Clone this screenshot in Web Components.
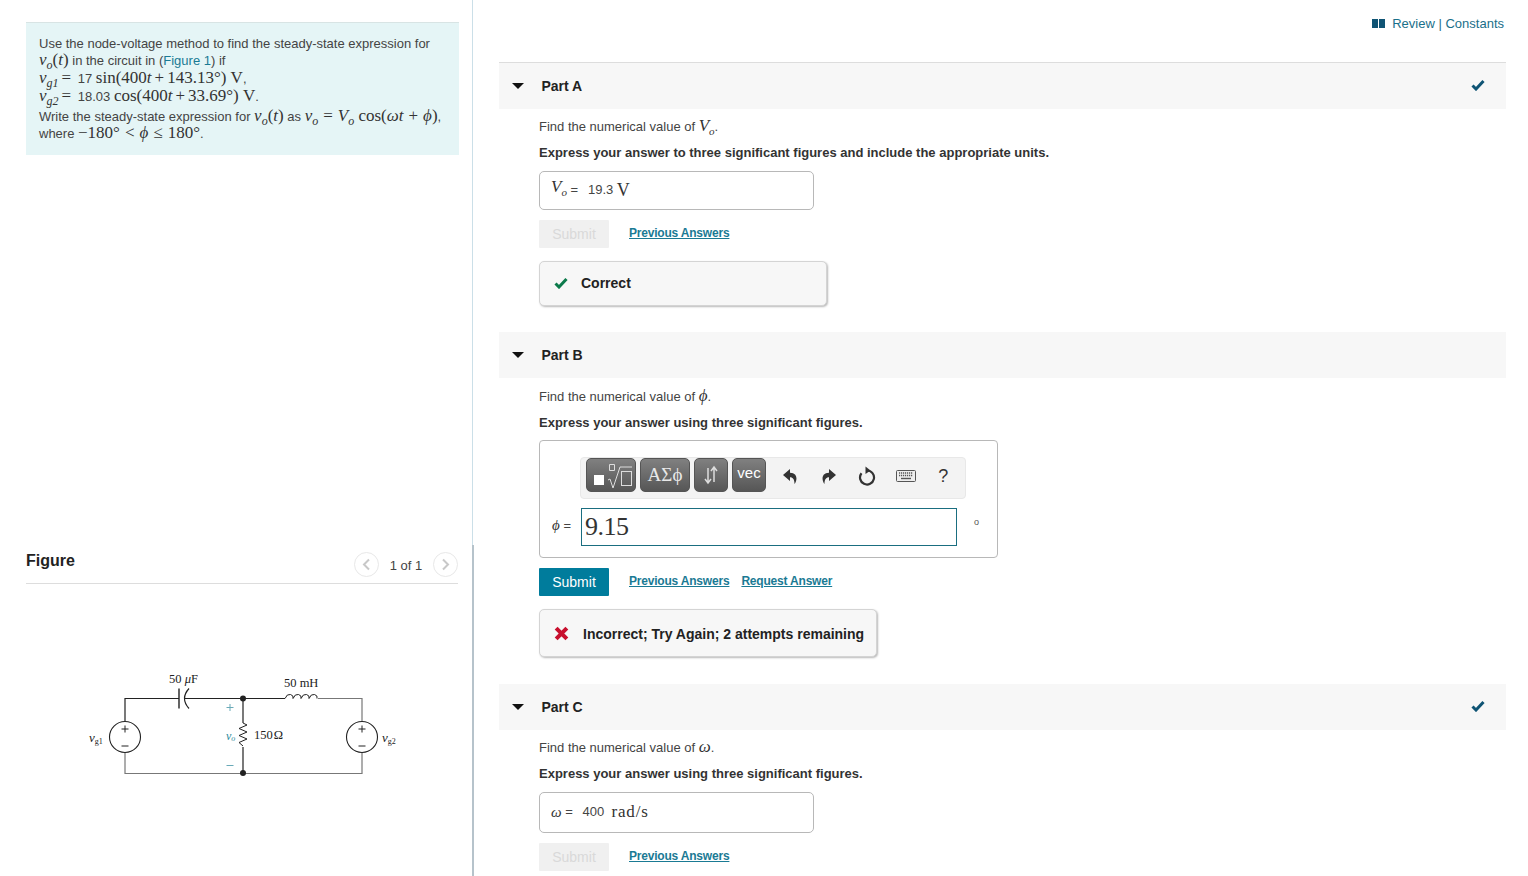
<!DOCTYPE html>
<html><head><meta charset="utf-8"><style>
html,body{margin:0;padding:0;height:876px;overflow:hidden;background:#fff}
body{font:13px/20px "Liberation Sans",Arial,sans-serif;color:#333;display:flex}
span.m{font-family:"Liberation Serif",serif;font-size:17px;color:#333}
span.m sub{font-size:12px;line-height:0}
span.m i.o{font-style:normal;margin:0 3px}
span.m i.o.w{margin:0 5px}
.vv{font:italic 17px/0 "Liberation Serif",serif;color:#333}
.vv sub{font-size:11px;line-height:0}
</style></head><body>
<template id="t-left"><style>
:host{display:flex;flex-direction:column;width:472px;height:876px;box-sizing:border-box;padding:22px 13px 0 26px;flex:none;position:relative}
.rail{position:absolute;left:472px;top:0;width:1px;height:545px;background:#cbdfe8}
.rail2{position:absolute;left:471.5px;top:545px;bottom:0;width:2px;background:#b6c3cb}
.intro{background:#e5f5f6;border-top:1px solid #d8e4e4;padding:12px 13px 0;height:133px;box-sizing:border-box;color:#444}
.fig{margin-top:384px}
</style><div class="rail"></div><div class="rail2"></div><div class="intro"><slot name="intro"></slot></div><div class="fig"><slot name="fig"></slot></div></template>

<template id="t-line"><style>
:host{display:block;font-size:13px;white-space:nowrap;color:#444}
</style><slot></slot></template>

<template id="t-pager"><style>
:host{display:flex;align-items:center;height:45px;border-bottom:1px solid #ddd;box-sizing:border-box;margin-right:1px}
h2{font:bold 16px/20px "Liberation Sans",sans-serif;color:#222;margin:0;flex:1}
.c{width:25px;height:25px;border:1px solid #e8e8e8;border-radius:50%;box-sizing:border-box;display:flex;align-items:center;justify-content:center;position:relative;top:3px}
.t{width:54px;text-align:center;font-size:13px;color:#444;position:relative;top:5px}
svg{display:block}
</style><h2>Figure</h2>
<span class="c"><svg width="9" height="13" viewBox="0 0 9 13"><path d="M7 1.5 2 6.5l5 5" fill="none" stroke="#c8c8c8" stroke-width="2"/></svg></span>
<span class="t">1 of 1</span>
<span class="c"><svg width="9" height="13" viewBox="0 0 9 13"><path d="M2 1.5 7 6.5l-5 5" fill="none" stroke="#c8c8c8" stroke-width="2"/></svg></span></template>

<template id="t-circuit"><style>
:host{display:block;margin-top:81px;margin-left:44px;width:340px;height:120px}
svg{display:block}
text{font-family:"Liberation Serif",serif;fill:#222}
.b{fill:#2d8a9c}
</style>
<svg width="340" height="120" viewBox="70 665 340 120">
<g fill="none" stroke="#222" stroke-width="1.2">
<path d="M125 721V698.5H179M185 698.5H285" />
<path d="M179 688.5V708.5" stroke-width="1.4"/>
<path d="M189 688.5Q180 698.5 189 708.5" stroke-width="1.2"/>
<path d="M243 698.5V723M243 747V773" />
<path d="M243 723l4 2-8 3.5 8 3.5-8 3.5 8 3.5-8 3.5 4 3.500" stroke-width="1"/>
<path d="M285 698.5q2-5 5.500-4t2.500 4q2-5 5.500-4t2.500 4q2-5 5.500-4t2.500 4q2-5 5.500-4t2.500 4" stroke-width="1"/>
</g>
<path d="M318 698.500H362V721M362 753V773.500H125V753" fill="none" stroke="#777" stroke-width="1.2"/>
<circle cx="125" cy="737" r="15.500" fill="#fff" stroke="#222" stroke-width="1.100"/>
<circle cx="362" cy="737" r="15.500" fill="#fff" stroke="#222" stroke-width="1.100"/>
<path d="M121.500 729h7M125 725.500v7M121.500 746h7M358.500 729h7M362 725.500v7M358.500 746h7" stroke="#222" stroke-width="1" fill="none"/>
<circle cx="243" cy="698.500" r="3" fill="#222"/><circle cx="243" cy="773" r="3" fill="#222"/>
<path d="M226.500 707.500h7M230 704v7M226.500 765.500h7" stroke="#6aaab8" stroke-width="1" fill="none"/>
<text x="169" y="683" font-size="12.500">50 <tspan font-style="italic">μ</tspan>F</text>
<text x="284" y="687" font-size="12.500">50 mH</text>
<text x="254" y="739" font-size="12.500">150<tspan dx="1">Ω</tspan></text>
<text x="226" y="740" font-size="12" font-style="italic" class="b">v<tspan font-size="8" dy="1">o</tspan></text>
<text x="89" y="742" font-size="13" font-style="italic">v<tspan font-size="8" dy="2" font-style="normal">g1</tspan></text>
<text x="382" y="742" font-size="13" font-style="italic">v<tspan font-size="8" dy="2" font-style="normal">g2</tspan></text>
</svg></template>

<template id="t-right"><style>
:host{display:block;flex:1;min-width:0;box-sizing:border-box;padding:0 22px 0 25px;margin-left:2px;height:876px;overflow:hidden}
.top{height:62px;display:flex;justify-content:flex-end;align-items:flex-start;gap:7px;padding:14px 2px 0 0;box-sizing:border-box;color:#1a6f8a;font-size:13px}
.top svg{margin-top:5px}
</style><div class="top"><svg width="13" height="9" viewBox="0 0 13 9"><path d="M0 0h6v9H0zM7 0h6v9H7z" fill="#0f5474"/></svg><span>Review | Constants</span></div><slot></slot></template>

<template id="t-part"><style>
:host{display:block}
header{height:var(--h,46px);background:#f7f7f7;border-top:var(--bt,0) solid #ddd;display:flex;align-items:center;box-sizing:border-box;position:relative;padding-left:42.500px;font-size:14px;font-weight:bold;color:#222}
header .car{position:absolute;left:13px;top:50%;margin-top:-3px;width:0;height:0;border:6px solid transparent;border-top:6px solid #111;border-bottom:0}
header .ok{position:absolute;right:21px;top:50%;margin-top:-7px;display:var(--ok,none)}
.body{padding:var(--pt,8px) 0 var(--pb,26px) 40px}
</style><header><span class="car"></span><span><slot name="title"></slot></span><svg class="ok" width="14" height="12" viewBox="0 0 14 12"><path d="M1.500 6.500 5 10 12.500 2" fill="none" stroke="#0f5474" stroke-width="3"/></svg></header><div class="body"><slot></slot></div></template>

<template id="t-q"><style>
:host{display:block;color:#444}
p{margin:0 0 6px;line-height:20px}
p.b{font-weight:bold;color:#333;margin-bottom:var(--qb,8px)}
</style><p><slot></slot></p><p class="b"><slot name="ex"></slot></p></template>

<template id="t-ans"><style>
:host{display:flex;align-items:center;width:275px;height:var(--ah,39px);box-sizing:border-box;border:1px solid #b8b8b8;border-radius:5px;padding:0 0 2px 11px;color:#444;white-space:nowrap}
</style><slot></slot></template>

<template id="t-actions"><style>
:host{display:flex;align-items:center;gap:20px;margin-top:10px;height:28px}
.btn{width:70px;height:28px;box-sizing:border-box;border-radius:1px;display:flex;align-items:center;justify-content:center;font-size:14px;background:#f0f0f0;color:#d9d9d9}
:host([active]) .btn{background:#007c9c;color:#fff}
.l{display:flex;gap:12px;position:relative;top:-1px}
::slotted(*){color:#1a7a94;text-decoration:underline;font-weight:bold;font-size:12px;letter-spacing:-.2px}
</style><span class="btn">Submit</span><span class="l"><slot></slot></span></template>

<template id="t-fb"><style>
:host{display:flex;align-items:center;box-sizing:border-box;margin-top:13px;height:var(--fh,45px);width:var(--fw,288px);background:#f7f7f7;border:1px solid #d4d4d4;border-radius:5px;box-shadow:1px 1px 2px rgba(0,0,0,.28);padding:var(--fp,0 0 1px 14px);gap:var(--fg,13px);font-size:14px;font-weight:bold;color:#222;white-space:nowrap}
</style><slot name="icon"></slot><slot></slot></template>

<template id="t-math"><style>
:host{display:block;box-sizing:border-box;width:459px;height:118px;border:1px solid #b8b8b8;border-radius:4px;position:relative;padding:16px 0 0 40px}
.bar{width:386px;height:42px;box-sizing:border-box;background:#f3f3f3;border:1px solid #e8e8e8;border-radius:4px;display:flex;align-items:flex-start;padding-left:5px;gap:4px}
.k{height:34px;box-sizing:border-box;border-radius:5px;background:linear-gradient(#808080,#565656);border:1px solid #555;color:#fff;display:flex;align-items:center;justify-content:center;font-size:15px}
.i{width:38.500px;height:36px;display:flex;align-items:center;justify-content:center;color:#333;font-size:16px;flex:none}
.tools{display:flex;margin-left:1px}
.row{display:flex;align-items:center;margin:9px 0 0 -29px}
.lab{width:30px;font-size:13px;color:#444;white-space:nowrap;position:relative;left:1px;top:-1px}
.inp{width:376px;height:38px;box-sizing:border-box;border:1px solid #1a6e80;font:26px/36px "Liberation Serif",serif;color:#333;padding-left:3px;letter-spacing:-.5px}
.deg{margin-left:17px;font-size:9px;color:#555;position:relative;top:-5px}
svg{display:block}
</style><div class="bar">
<span class="k" style="width:50px"><svg width="48" height="32" viewBox="0 0 48 32"><rect x="7" y="16" width="10" height="10" fill="#fff"/><path d="M22.500 5.500h5v6h-5z" fill="none" stroke="#ddd"/><path d="M21 21l2-1 3 9 7-21h12" fill="none" stroke="#ddd" stroke-width="1"/><rect x="34.500" y="12.500" width="10" height="14" fill="none" stroke="#ddd"/></svg></span>
<span class="k" style="width:50px;font:19px 'Liberation Serif',serif;color:#e8e8e8">ΑΣϕ</span>
<span class="k" style="width:34px"><svg width="18" height="20" viewBox="0 0 18 20"><path d="M6 3v14M3 14l3 4 3-4M12 17V3M9 6l3-4 3 4" fill="none" stroke="#ddd" stroke-width="1.500"/></svg></span>
<span class="k" style="width:34px;align-items:flex-start;padding-top:6px;line-height:16px">vec</span>
<span class="tools">
<span class="i"><svg width="15" height="15" viewBox="0 0 15 15"><path d="M7 0 0 6l7 6V8.300c3 0 4.500 2.200 4.500 6.700 2.500-3 4-11-4.500-11.300z" fill="#333"/></svg></span>
<span class="i"><svg width="15" height="15" viewBox="0 0 15 15"><path d="M8 0l7 6-7 6V8.300c-3 0-4.500 2.200-4.500 6.700C1 12-.5 4 8 3.700z" fill="#333"/></svg></span>
<span class="i"><svg width="18" height="20" viewBox="0 0 18 20"><path d="M9 4.500a7 7 0 1 1-5.500 2.700" fill="none" stroke="#333" stroke-width="2.200"/><path d="M7.500 0.500l5 4-5 3.500z" fill="#333"/></svg></span>
<span class="i"><svg width="20" height="12" viewBox="0 0 20 12"><rect x=".5" y=".5" width="19" height="11" rx="1" fill="#eee" stroke="#555"/><path d="M3 3h14M3 5.500h14" stroke="#555" stroke-width="1.400" stroke-dasharray="1.200 .8"/><path d="M5 8.500h10" stroke="#555" stroke-width="1.400"/></svg></span>
<span class="i" style="font-size:18px;margin-left:-1px">?</span>
</span>
</div>
<div class="row"><span class="lab"><slot name="label"></slot></span><span class="inp"><slot></slot></span><span class="deg">o</span></div></template>

<x-left>
  <div slot="intro">
    <x-line style="height:16px;line-height:17px">Use the node-voltage method to find the steady-state expression for</x-line>
    <x-line style="height:17px;line-height:17px"><span class="m"><i>v<sub>o</sub></i>(<i>t</i>)</span>&nbsp;in the circuit in (<a style="color:#1a7a94">Figure 1</a>) if</x-line>
    <x-line style="height:18px;line-height:19px"><span class="m"><i>v<sub>g1</sub></i><i class="o">=</i></span> 17 <span class="m">sin(400<i>t</i><i class="o">+</i>143.13°)&nbsp;V</span>,</x-line>
    <x-line style="height:20px;line-height:19px"><span class="m"><i>v<sub>g2</sub></i><i class="o">=</i></span> 18.03 <span class="m">cos(400<i>t</i><i class="o">+</i>33.69°)&nbsp;V</span>.</x-line>
    <x-line style="height:18px;line-height:19px">Write the steady-state expression for <span class="m"><i>v<sub>o</sub></i>(<i>t</i>)</span>&nbsp;as <span class="m"><i>v<sub>o</sub></i><i class="o w">=</i><i>V<sub>o</sub></i>&nbsp;cos(<i>ωt</i><i class="o w">+</i><i>ϕ</i>)</span>,</x-line>
    <x-line style="height:17px;line-height:17px">where <span class="m">−180°<i class="o w">&lt;</i><i>ϕ</i><i class="o w">≤</i>180°</span>.</x-line>
  </div>
  <div slot="fig"><x-pager></x-pager><x-circuit></x-circuit></div>
</x-left>
<x-right>
  <x-part style="--h:47px;--bt:1px;--ok:block">
    <span slot="title">Part A</span>
    <x-q>Find the numerical value of <span class="vv">V<sub>o</sub></span>.<span slot="ex">Express your answer to three significant figures and include the appropriate units.</span></x-q>
    <x-ans><span class="vv">V<sub>o</sub></span>&nbsp;=&nbsp;&nbsp;&thinsp;19.3&nbsp;<span style="font:18px/0 'Liberation Serif',serif;color:#333">V</span></x-ans>
    <x-actions><a>Previous Answers</a></x-actions>
    <x-fb><svg slot="icon" width="14" height="12" viewBox="0 0 14 12"><path d="M1.500 6.500 5 10 12.500 2" fill="none" stroke="#0c7a4b" stroke-width="3"/></svg>Correct</x-fb>
  </x-part>
  <x-part style="--pt:9px;--pb:27px;--qb:7px">
    <span slot="title">Part B</span>
    <x-q>Find the numerical value of <span class="vv">ϕ</span>.<span slot="ex">Express your answer using three significant figures.</span></x-q>
    <x-math><span slot="label"><span class="vv" style="font-size:15px">ϕ</span> =</span>9.15</x-math>
    <x-actions active><a>Previous Answers</a><a>Request Answer</a></x-actions>
    <x-fb style="--fh:48px;--fw:338px;--fg:14px;--fp:1px 0 0 14px"><svg slot="icon" width="15" height="15" viewBox="0 0 14 14"><path d="M2 2l10 10M12 2 2 12" fill="none" stroke="#c8102e" stroke-width="3.800"/></svg>Incorrect; Try Again; 2 attempts remaining</x-fb>
  </x-part>
  <x-part style="--ok:block">
    <span slot="title">Part C</span>
    <x-q>Find the numerical value of <span class="vv">ω</span>.<span slot="ex">Express your answer using three significant figures.</span></x-q>
    <x-ans style="--ah:41px"><span class="vv" style="font-size:15px">ω</span>&nbsp;=&nbsp;&nbsp;&thinsp;400&nbsp;&nbsp;<span style="font:17px/0 'Liberation Serif',serif;color:#333;letter-spacing:.8px">rad/s</span></x-ans>
    <x-actions><a>Previous Answers</a></x-actions>
  </x-part>
</x-right>
<script>
for(const [n,t] of [['x-left','t-left'],['x-line','t-line'],['x-pager','t-pager'],['x-circuit','t-circuit'],['x-right','t-right'],['x-part','t-part'],['x-q','t-q'],['x-ans','t-ans'],['x-actions','t-actions'],['x-fb','t-fb'],['x-math','t-math']]){
  customElements.define(n,class extends HTMLElement{constructor(){super();this.attachShadow({mode:'open'}).appendChild(document.getElementById(t).content.cloneNode(true))}});
}
</script>
</body></html>
